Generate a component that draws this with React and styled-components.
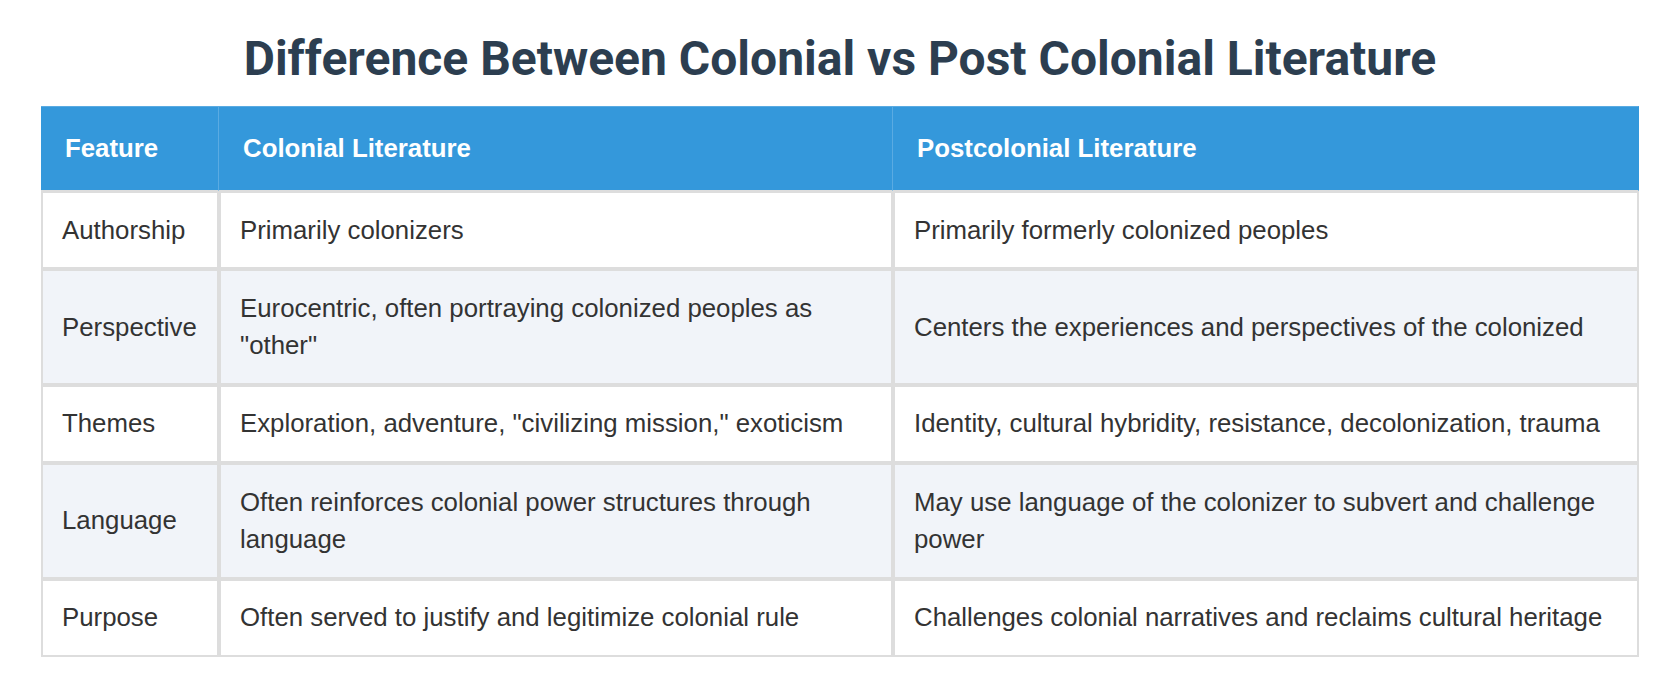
import React from 'react'
import styled, { createGlobalStyle } from 'styled-components'

const GlobalStyle = createGlobalStyle`
  html, body {
    margin: 0;
    padding: 0;
    background: #ffffff;
  }
`

const Page = styled.div`
  padding: 31px 41px 40px;
  font-family: "Liberation Sans", Arial, sans-serif;
`

const Title = styled.h1`
  margin: 0 0 19px;
  font-family: Roboto, "Liberation Sans", sans-serif;
  font-weight: 700;
  font-size: 48px;
  line-height: 56px;
  color: #2c3e50;
  text-align: center;
`

const Table = styled.table`
  width: 100%;
  table-layout: fixed;
  border-collapse: separate;
  border-spacing: 0;
`

const HeadCell = styled.th`
  background: #3498db;
  color: #ffffff;
  font-weight: 700;
  font-size: 25.8px;
  line-height: 37px;
  text-align: left;
  vertical-align: middle;
  padding: 23px 24px;
  border-top: 1px solid #5aabe2;
  border-right: 1px solid ${(p) => (p.last ? '#3498db' : '#5aabe2')};
  border-bottom: 1px solid #dddddd;
`

const Row = styled.tr`
  background: ${(p) => (p.alt ? '#f1f4f9' : '#ffffff')};
`

const Cell = styled.td`
  border: 2px solid #dddddd;
  padding: 18.7px 19px;
  font-size: 25.8px;
  line-height: 37px;
  color: #333333;
  vertical-align: middle;
`

const rows = [
  ['Authorship', 'Primarily colonizers', 'Primarily formerly colonized peoples'],
  [
    'Perspective',
    'Eurocentric, often portraying colonized peoples as "other"',
    'Centers the experiences and perspectives of the colonized',
  ],
  [
    'Themes',
    'Exploration, adventure, "civilizing mission," exoticism',
    'Identity, cultural hybridity, resistance, decolonization, trauma',
  ],
  [
    'Language',
    'Often reinforces colonial power structures through language',
    'May use language of the colonizer to subvert and challenge power',
  ],
  [
    'Purpose',
    'Often served to justify and legitimize colonial rule',
    'Challenges colonial narratives and reclaims cultural heritage',
  ],
]

const App = () => {
  return (
    <Page>
      <GlobalStyle />
      <Title>Difference Between Colonial vs Post Colonial Literature</Title>
      <Table>
        <colgroup>
          <col style={{ width: 178 }} />
          <col style={{ width: 674 }} />
          <col />
        </colgroup>
        <thead>
          <tr>
            <HeadCell>Feature</HeadCell>
            <HeadCell>Colonial Literature</HeadCell>
            <HeadCell last>Postcolonial Literature</HeadCell>
          </tr>
        </thead>
        <tbody>
          {rows.map((r, i) => (
            <Row key={r[0]} alt={i % 2 === 1}>
              <Cell>{r[0]}</Cell>
              <Cell>{r[1]}</Cell>
              <Cell>{r[2]}</Cell>
            </Row>
          ))}
        </tbody>
      </Table>
    </Page>
  )
}

export default App
